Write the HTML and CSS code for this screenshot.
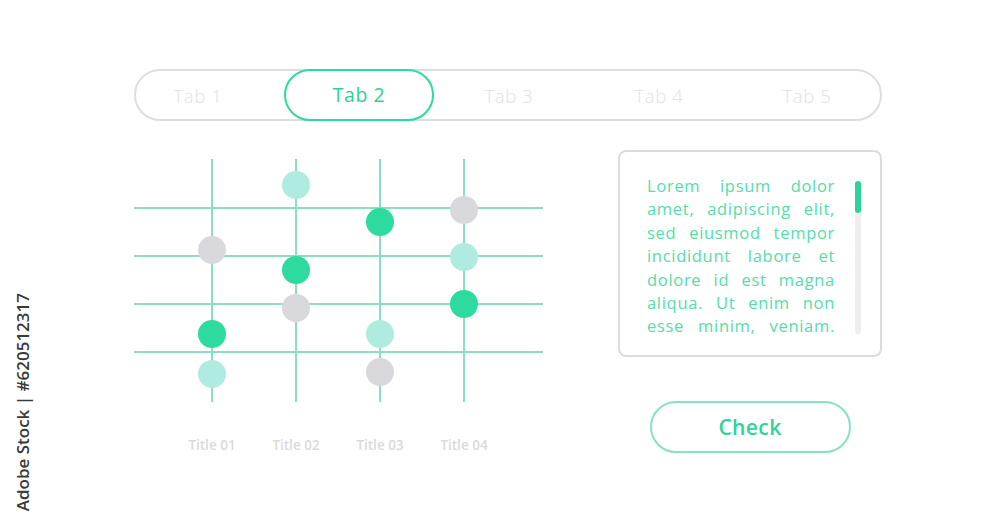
FILE: index.html
```html
<!DOCTYPE html>
<html lang="en">
<head>
  <meta charset="UTF-8" />
  <meta name="viewport" content="width=device-width, initial-scale=1" />
  <title>Tabs and chart</title>
  <link rel="stylesheet" href="styles.css">
</head>
<body>
  <div class="page">
    <nav class="tabs">
      <div class="tab tab-first">Tab 1</div>
      <div class="tab active">Tab 2</div>
      <div class="tab">Tab 3</div>
      <div class="tab">Tab 4</div>
      <div class="tab">Tab 5</div>
    </nav>

    <div class="content">
      <svg class="chart" width="410" height="300" viewBox="0 0 410 300">
        <g class="grid">
          <line x1="0" y1="49" x2="409" y2="49" />
          <line x1="0" y1="97" x2="409" y2="97" />
          <line x1="0" y1="145" x2="409" y2="145" />
          <line x1="0" y1="193" x2="409" y2="193" />
          <line x1="78" y1="0" x2="78" y2="243" />
          <line x1="162" y1="0" x2="162" y2="243" />
          <line x1="246" y1="0" x2="246" y2="243" />
          <line x1="330" y1="0" x2="330" y2="243" />
        </g>
        <!-- column 1 -->
        <circle class="dot grey" cx="78" cy="91" r="14" />
        <circle class="dot dark" cx="78" cy="175" r="14" />
        <circle class="dot light" cx="78" cy="215" r="14" />
        <!-- column 2 -->
        <circle class="dot light" cx="162" cy="26" r="14" />
        <circle class="dot dark" cx="162" cy="111" r="14" />
        <circle class="dot grey" cx="162" cy="149" r="14" />
        <!-- column 3 -->
        <circle class="dot dark" cx="246" cy="63" r="14" />
        <circle class="dot light" cx="246" cy="175" r="14" />
        <circle class="dot grey" cx="246" cy="213" r="14" />
        <!-- column 4 -->
        <circle class="dot grey" cx="330" cy="51" r="14" />
        <circle class="dot light" cx="330" cy="98" r="14" />
        <circle class="dot dark" cx="330" cy="145" r="14" />
        <g class="titles">
          <text x="78" y="291">Title 01</text>
          <text x="162" y="291">Title 02</text>
          <text x="246" y="291">Title 03</text>
          <text x="330" y="291">Title 04</text>
        </g>
      </svg>

      <div class="side">
        <div class="textbox">
          <p class="text">
            <span>Lorem ipsum dolor</span>
            <span>amet, adipiscing elit,</span>
            <span>sed eiusmod tempor</span>
            <span>incididunt labore et</span>
            <span>dolore id est magna</span>
            <span>aliqua. Ut enim non</span>
            <span>esse minim, veniam.</span>
          </p>
          <div class="scrollbar"><div class="thumb"></div></div>
        </div>
        <button class="check">Check</button>
      </div>
    </div>
  </div>

  <div class="stamp">Adobe Stock | #620512317</div>
</body>
</html>
```

FILE: styles.css
```css
body {
  margin: 0;
  background: #fff;
  font-family: "Open Sans", "Liberation Sans", sans-serif;
}
.page {
  padding: 69px 0 0 134px;
}
.tabs {
  width: 744px;
  height: 48px;
  border: 2px solid #dedede;
  border-radius: 28px;
  display: grid;
  grid-template-columns: 148px 150px 150px 150px 1fr;
  align-items: center;
}
.tab {
  text-align: center;
  font-size: 18.5px;
  font-weight: 300;
  letter-spacing: 0.6px;
  color: #e2e2e2;
}
.tab-first {
  padding-right: 24px;
}
.tab.active {
  height: 48px;
  margin: -2px 0;
  line-height: 48px;
  border: 2px solid #2fdaa1;
  border-radius: 28px;
  color: #2ecf98;
  font-size: 19.5px;
  font-weight: 400;
}
.content {
  display: flex;
  align-items: flex-start;
  margin-top: 29px;
}
.chart {
  display: block;
  margin-top: 9px;
}
.grid line {
  stroke: #8cdcc8;
  stroke-width: 2;
}
.dot.dark { fill: #2edb9f; }
.dot.light { fill: #b0ebdf; }
.dot.grey { fill: #d9d8dd; }
.titles text {
  font-family: "Open Sans", "Liberation Sans", sans-serif;
  font-size: 13.5px;
  font-weight: 600;
  fill: #dadadd;
  text-anchor: middle;
}
.side {
  margin-left: 74px;
  width: 264px;
  display: flex;
  flex-direction: column;
  align-items: center;
}
.textbox {
  box-sizing: border-box;
  width: 264px;
  height: 207px;
  border: 2px solid #dcdcdf;
  border-radius: 8px;
  padding: 22px 19px 0 27px;
  display: flex;
  gap: 20px;
}
.text {
  margin: 0;
  width: 188px;
  font-size: 16.5px;
  letter-spacing: 0.7px;
  line-height: 23.4px;
  color: #55dcaa;
}
.text span {
  display: block;
  text-align: justify;
  text-align-last: justify;
}
.scrollbar {
  margin-top: 7px;
  width: 6px;
  height: 153px;
  border-radius: 3px;
  background: #eeeeef;
}
.thumb {
  height: 32px;
  border-radius: 3px;
  background: #2ed39b;
}
.check {
  margin-top: 44px;
  width: 201px;
  height: 52px;
  border: 2.5px solid #86e1c6;
  border-radius: 26px;
  background: #fff;
  font-family: "Open Sans", "Liberation Sans", sans-serif;
  font-size: 21px;
  font-weight: 600;
  letter-spacing: 0.4px;
  color: #2ed39b;
}
.stamp {
  position: absolute;
  left: 11px;
  bottom: 12px;
  writing-mode: vertical-rl;
  transform: rotate(180deg);
  font-size: 17px;
  font-weight: 600;
  color: #3a3a3a;
}
```
